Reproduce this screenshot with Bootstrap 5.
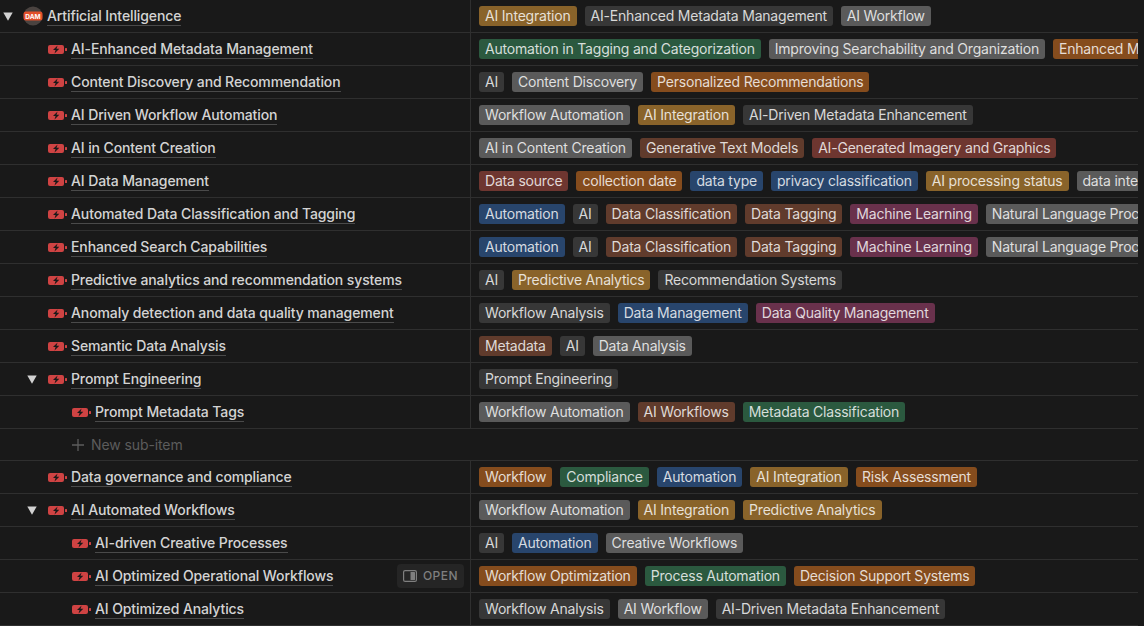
<!DOCTYPE html>
<html lang="en">
<head>
<meta charset="utf-8">
<title>Artificial Intelligence</title>
<link rel="stylesheet" href="https://cdn.jsdelivr.net/npm/bootstrap@5.3.0/dist/css/bootstrap.min.css">
<style>
html, body { background: #191919; height: 100%; overflow: hidden; }
body { font-family: Inter, "Liberation Sans", sans-serif; font-size: 14px; color: rgba(255,255,255,.81); }
.sheet { width: 1138px; }
.tr { height: 33px; border-bottom: 1px solid #2f2f2f; }
.tr-short { height: 32px; }
.name-cell { width: 471px; border-right: 1px solid #2f2f2f; position: relative; }
.lvl0 { padding-left: 3px; }
.lvl1 { padding-left: 48px; }
.lvl1-t { padding-left: 27px; }
.lvl2 { padding-left: 72px; }
.tags-cell { min-width: 0; padding-left: 8px; gap: 8px; }
.arrow { width: 10px; height: 9px; fill: #d2d2d2; margin-right: 11px; }
.arrow-root { margin-right: 10px; }
.bat { width: 19px; height: 9px; margin-right: 4px; }
.dam { width: 20px; height: 20px; margin-right: 4px; }
.ttl { font-weight: 500; line-height: 18px; letter-spacing: -.11px; border-bottom: 1px solid #4a4a4a; color: rgba(255,255,255,.83); }
.new-item { color: #5c5c5c; font-weight: 400; letter-spacing: -.1px; }
.new-item svg { width: 12px; height: 12px; margin-right: 7px; }
.open-btn { position: absolute; right: 6px; top: 4px; height: 24px; width: 67px; background: #252525; border-radius: 4px; color: #7f7f7f; font-size: 12px; font-weight: 500; letter-spacing: .5px; gap: 6px; }
.open-btn svg { width: 14px; height: 12px; }
.tg { height: 20px; line-height: 20px; padding: 0 6px; border-radius: 3px; flex-shrink: 0; white-space: nowrap; letter-spacing: -.2px; color: rgba(255,255,255,.81); }
.c-def { background: #373737; }
.c-gray { background: #5a5a5a; }
.c-brown { background: #603b2c; }
.c-orange { background: #854c1d; }
.c-yellow { background: #89632a; }
.c-green { background: #2b593f; }
.c-blue { background: #28456c; }
.c-pink { background: #69314c; }
.c-red { background: #6e3630; }
</style>
</head>
<body class="m-0">
<svg width="0" height="0" class="d-none">
  <symbol id="bolt" viewBox="0 0 19 9">
    <rect x="0" y="0" width="16" height="9" rx="2" fill="#cf4343"/>
    <rect x="17" y="3" width="2" height="3" rx=".5" fill="#cf4343"/>
    <path d="M9.6.5 5 5.1h2.6L6.5 8.5 11.3 3.8H8.5z" fill="#191919"/>
  </symbol>
  <symbol id="tri" viewBox="0 0 10 9"><path d="M.3.4h9.4L5 8.8z"/></symbol>
</svg>
<div class="sheet">

  <div class="tr d-flex">
    <div class="name-cell d-flex align-items-center lvl0 flex-shrink-0">
      <svg class="arrow arrow-root"><use href="#tri"/></svg>
      <svg class="dam" viewBox="0 0 20 20"><circle cx="10" cy="10" r="9.5" fill="#4a4340"/><rect x="0.5" y="5.5" width="19" height="9" rx="2.5" fill="#e2502a"/><text x="10" y="12.5" text-anchor="middle" font-size="6.5" font-weight="700" fill="#fff">DAM</text></svg>
      <span class="ttl">Artificial Intelligence</span>
    </div>
    <div class="tags-cell d-flex align-items-center overflow-hidden flex-grow-1">
      <span class="tg c-yellow">AI Integration</span><span class="tg c-def">AI-Enhanced Metadata Management</span><span class="tg c-gray">AI Workflow</span>
    </div>
  </div>

  <div class="tr d-flex">
    <div class="name-cell d-flex align-items-center lvl1 flex-shrink-0"><svg class="bat"><use href="#bolt"/></svg><span class="ttl">AI-Enhanced Metadata Management</span></div>
    <div class="tags-cell d-flex align-items-center overflow-hidden flex-grow-1">
      <span class="tg c-green">Automation in Tagging and Categorization</span><span class="tg c-gray">Improving Searchability and Organization</span><span class="tg c-orange">Enhanced Metadata</span>
    </div>
  </div>

  <div class="tr d-flex">
    <div class="name-cell d-flex align-items-center lvl1 flex-shrink-0"><svg class="bat"><use href="#bolt"/></svg><span class="ttl">Content Discovery and Recommendation</span></div>
    <div class="tags-cell d-flex align-items-center overflow-hidden flex-grow-1">
      <span class="tg c-def">AI</span><span class="tg c-gray">Content Discovery</span><span class="tg c-orange">Personalized Recommendations</span>
    </div>
  </div>

  <div class="tr d-flex">
    <div class="name-cell d-flex align-items-center lvl1 flex-shrink-0"><svg class="bat"><use href="#bolt"/></svg><span class="ttl">AI Driven Workflow Automation</span></div>
    <div class="tags-cell d-flex align-items-center overflow-hidden flex-grow-1">
      <span class="tg c-gray">Workflow Automation</span><span class="tg c-yellow">AI Integration</span><span class="tg c-def">AI-Driven Metadata Enhancement</span>
    </div>
  </div>

  <div class="tr d-flex">
    <div class="name-cell d-flex align-items-center lvl1 flex-shrink-0"><svg class="bat"><use href="#bolt"/></svg><span class="ttl">AI in Content Creation</span></div>
    <div class="tags-cell d-flex align-items-center overflow-hidden flex-grow-1">
      <span class="tg c-gray">AI in Content Creation</span><span class="tg c-brown">Generative Text Models</span><span class="tg c-red">AI-Generated Imagery and Graphics</span>
    </div>
  </div>

  <div class="tr d-flex">
    <div class="name-cell d-flex align-items-center lvl1 flex-shrink-0"><svg class="bat"><use href="#bolt"/></svg><span class="ttl">AI Data Management</span></div>
    <div class="tags-cell d-flex align-items-center overflow-hidden flex-grow-1">
      <span class="tg c-red">Data source</span><span class="tg c-orange">collection date</span><span class="tg c-blue">data type</span><span class="tg c-blue">privacy classification</span><span class="tg c-yellow">AI processing status</span><span class="tg c-gray">data integrity</span>
    </div>
  </div>

  <div class="tr d-flex">
    <div class="name-cell d-flex align-items-center lvl1 flex-shrink-0"><svg class="bat"><use href="#bolt"/></svg><span class="ttl">Automated Data Classification and Tagging</span></div>
    <div class="tags-cell d-flex align-items-center overflow-hidden flex-grow-1">
      <span class="tg c-blue">Automation</span><span class="tg c-def">AI</span><span class="tg c-brown">Data Classification</span><span class="tg c-brown">Data Tagging</span><span class="tg c-pink">Machine Learning</span><span class="tg c-gray">Natural Language Processing</span>
    </div>
  </div>

  <div class="tr d-flex">
    <div class="name-cell d-flex align-items-center lvl1 flex-shrink-0"><svg class="bat"><use href="#bolt"/></svg><span class="ttl">Enhanced Search Capabilities</span></div>
    <div class="tags-cell d-flex align-items-center overflow-hidden flex-grow-1">
      <span class="tg c-blue">Automation</span><span class="tg c-def">AI</span><span class="tg c-brown">Data Classification</span><span class="tg c-brown">Data Tagging</span><span class="tg c-pink">Machine Learning</span><span class="tg c-gray">Natural Language Processing</span>
    </div>
  </div>

  <div class="tr d-flex">
    <div class="name-cell d-flex align-items-center lvl1 flex-shrink-0"><svg class="bat"><use href="#bolt"/></svg><span class="ttl">Predictive analytics and recommendation systems</span></div>
    <div class="tags-cell d-flex align-items-center overflow-hidden flex-grow-1">
      <span class="tg c-def">AI</span><span class="tg c-yellow">Predictive Analytics</span><span class="tg c-def">Recommendation Systems</span>
    </div>
  </div>

  <div class="tr d-flex">
    <div class="name-cell d-flex align-items-center lvl1 flex-shrink-0"><svg class="bat"><use href="#bolt"/></svg><span class="ttl">Anomaly detection and data quality management</span></div>
    <div class="tags-cell d-flex align-items-center overflow-hidden flex-grow-1">
      <span class="tg c-def">Workflow Analysis</span><span class="tg c-blue">Data Management</span><span class="tg c-pink">Data Quality Management</span>
    </div>
  </div>

  <div class="tr d-flex">
    <div class="name-cell d-flex align-items-center lvl1 flex-shrink-0"><svg class="bat"><use href="#bolt"/></svg><span class="ttl">Semantic Data Analysis</span></div>
    <div class="tags-cell d-flex align-items-center overflow-hidden flex-grow-1">
      <span class="tg c-brown">Metadata</span><span class="tg c-def">AI</span><span class="tg c-gray">Data Analysis</span>
    </div>
  </div>

  <div class="tr d-flex">
    <div class="name-cell d-flex align-items-center lvl1-t flex-shrink-0"><svg class="arrow"><use href="#tri"/></svg><svg class="bat"><use href="#bolt"/></svg><span class="ttl">Prompt Engineering</span></div>
    <div class="tags-cell d-flex align-items-center overflow-hidden flex-grow-1">
      <span class="tg c-def">Prompt Engineering</span>
    </div>
  </div>

  <div class="tr d-flex">
    <div class="name-cell d-flex align-items-center lvl2 flex-shrink-0"><svg class="bat"><use href="#bolt"/></svg><span class="ttl">Prompt Metadata Tags</span></div>
    <div class="tags-cell d-flex align-items-center overflow-hidden flex-grow-1">
      <span class="tg c-gray">Workflow Automation</span><span class="tg c-brown">AI Workflows</span><span class="tg c-green">Metadata Classification</span>
    </div>
  </div>

  <div class="tr tr-short d-flex">
    <div class="name-cell new-item d-flex align-items-center lvl2 flex-shrink-0 border-end-0"><svg viewBox="0 0 12 12"><path d="M6 0v12M0 6h12" stroke="#5c5c5c" stroke-width="1.3" fill="none"/></svg><span>New sub-item</span></div>
    <div class="tags-cell flex-grow-1"></div>
  </div>

  <div class="tr d-flex">
    <div class="name-cell d-flex align-items-center lvl1 flex-shrink-0"><svg class="bat"><use href="#bolt"/></svg><span class="ttl">Data governance and compliance</span></div>
    <div class="tags-cell d-flex align-items-center overflow-hidden flex-grow-1">
      <span class="tg c-orange">Workflow</span><span class="tg c-green">Compliance</span><span class="tg c-blue">Automation</span><span class="tg c-yellow">AI Integration</span><span class="tg c-orange">Risk Assessment</span>
    </div>
  </div>

  <div class="tr d-flex">
    <div class="name-cell d-flex align-items-center lvl1-t flex-shrink-0"><svg class="arrow"><use href="#tri"/></svg><svg class="bat"><use href="#bolt"/></svg><span class="ttl">AI Automated Workflows</span></div>
    <div class="tags-cell d-flex align-items-center overflow-hidden flex-grow-1">
      <span class="tg c-gray">Workflow Automation</span><span class="tg c-yellow">AI Integration</span><span class="tg c-yellow">Predictive Analytics</span>
    </div>
  </div>

  <div class="tr d-flex">
    <div class="name-cell d-flex align-items-center lvl2 flex-shrink-0"><svg class="bat"><use href="#bolt"/></svg><span class="ttl">AI-driven Creative Processes</span></div>
    <div class="tags-cell d-flex align-items-center overflow-hidden flex-grow-1">
      <span class="tg c-def">AI</span><span class="tg c-blue">Automation</span><span class="tg c-gray">Creative Workflows</span>
    </div>
  </div>

  <div class="tr d-flex">
    <div class="name-cell d-flex align-items-center lvl2 flex-shrink-0"><svg class="bat"><use href="#bolt"/></svg><span class="ttl">AI Optimized Operational Workflows</span>
      <span class="open-btn d-flex align-items-center justify-content-center"><svg viewBox="0 0 14 12"><rect x=".6" y=".6" width="12.8" height="10.8" rx="1.5" fill="none" stroke="#7f7f7f" stroke-width="1.2"/><rect x="7.5" y="2" width="4.5" height="8" rx=".5" fill="#7f7f7f"/></svg>OPEN</span>
    </div>
    <div class="tags-cell d-flex align-items-center overflow-hidden flex-grow-1">
      <span class="tg c-orange">Workflow Optimization</span><span class="tg c-green">Process Automation</span><span class="tg c-orange">Decision Support Systems</span>
    </div>
  </div>

  <div class="tr d-flex">
    <div class="name-cell d-flex align-items-center lvl2 flex-shrink-0"><svg class="bat"><use href="#bolt"/></svg><span class="ttl">AI Optimized Analytics</span></div>
    <div class="tags-cell d-flex align-items-center overflow-hidden flex-grow-1">
      <span class="tg c-def">Workflow Analysis</span><span class="tg c-gray">AI Workflow</span><span class="tg c-def">AI-Driven Metadata Enhancement</span>
    </div>
  </div>

</div>
</body>
</html>
